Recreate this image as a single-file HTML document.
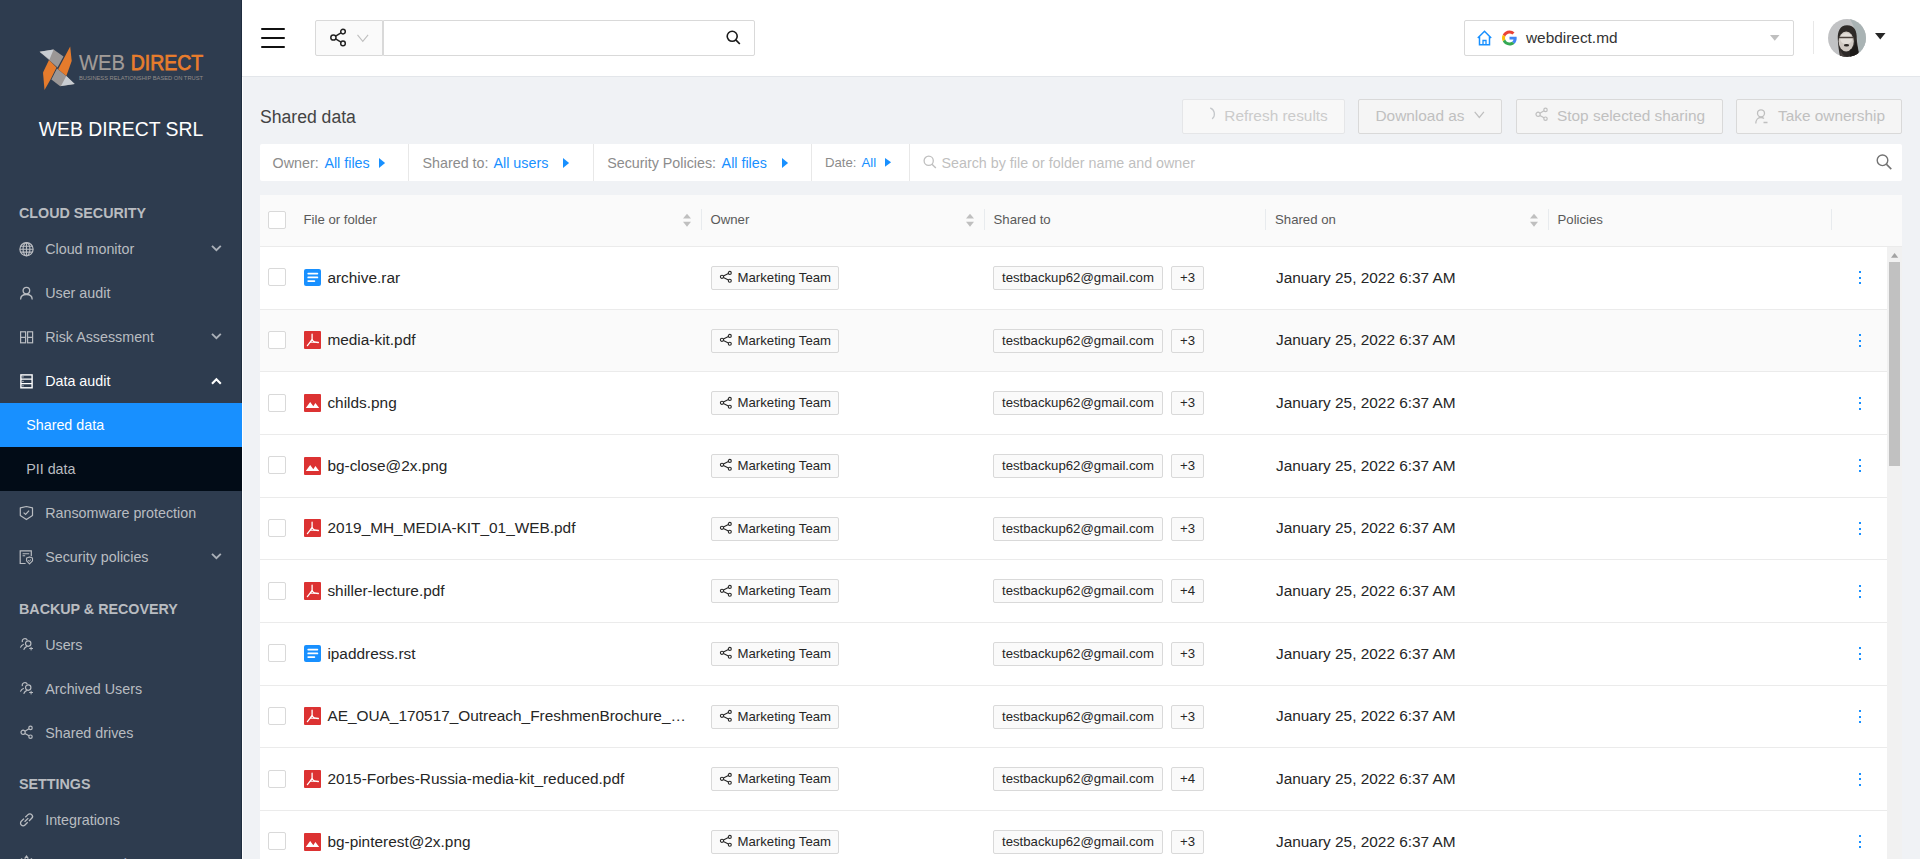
<!DOCTYPE html><html><head><meta charset="utf-8"><title>Shared data</title><style>
*{box-sizing:border-box;margin:0;padding:0}
html,body{width:1920px;height:859px;overflow:hidden;background:#f0f2f5;font-family:"Liberation Sans",sans-serif}
.t{position:absolute;white-space:nowrap}
.a{position:absolute}
svg{position:absolute;overflow:visible}
</style></head><body><div class="a" style="left:0;top:0;width:242px;height:859px;background:#2e3c4f;border-right:1px solid #1f2d3f"></div>
<svg style="left:0;top:0" width="242" height="100">
<polygon points="39.6,51.7 53.6,49.6 63.5,56.5 57.5,67.5 49,60" fill="#9b9796"/>
<polygon points="39.6,51.7 53.6,49.6 49.5,59.5" fill="#c9cdd2"/>
<polygon points="57,68.5 66.3,76 74.7,84 60.2,86.2 51.4,79.5" fill="#9b9796"/>
<polygon points="66.3,76 74.7,84 61,86" fill="#c9cdd2"/>
<polygon points="70.2,46.5 71.7,61 66.3,76 58.1,69.2" fill="#e57b2c"/>
<polygon points="49,60 56.5,67.5 50.5,79.5 44.5,90 43,72.5" fill="#e57b2c"/>
<text x="79" y="70" font-family="Liberation Sans" font-size="21.8" fill="#a19b98" stroke="#a19b98" stroke-width="0.15" textLength="46" lengthAdjust="spacingAndGlyphs" style="letter-spacing:0">WEB</text>
<text x="130.8" y="70" font-family="Liberation Sans" font-weight="normal" font-size="21.8" fill="#e87d2c" stroke="#e87d2c" stroke-width="0.75" textLength="72.3" lengthAdjust="spacingAndGlyphs">DIRECT</text>
<text x="79" y="79.8" font-family="Liberation Sans" font-weight="normal" font-size="5.6" fill="#928c8a" textLength="124" lengthAdjust="spacingAndGlyphs">BUSINESS RELATIONSHIP BASED ON TRUST</text>
</svg>
<div class="t" style="left:0;width:242px;text-align:center;top:120.18px;font-size:19.4px;line-height:19.4px;color:#fff">WEB DIRECT SRL</div>
<div class="t" style="left:19px;top:205.90px;font-size:14.3px;line-height:14.3px;color:#b9bcc1;font-weight:bold;">CLOUD SECURITY</div>
<div class="t" style="left:19px;top:601.90px;font-size:14.3px;line-height:14.3px;color:#b9bcc1;font-weight:bold;">BACKUP &amp; RECOVERY</div>
<div class="t" style="left:19px;top:776.90px;font-size:14.3px;line-height:14.3px;color:#b9bcc1;font-weight:bold;">SETTINGS</div>
<div class="a" style="left:0;top:403px;width:242px;height:44px;background:#1890ff"></div>
<div class="a" style="left:0;top:447px;width:242px;height:44px;background:#020c17"></div>
<div class="t" style="left:45.2px;top:241.70px;font-size:14.3px;line-height:14.3px;color:#b9bcc1;font-weight:normal;">Cloud monitor</div>
<svg style="left:19px;top:241.8px" width="15" height="15"><circle cx="7.5" cy="7.2" r="6.6" fill="none" stroke="#b9bcc1" stroke-width="1.2"/><ellipse cx="7.5" cy="7.2" rx="3.4" ry="6.6" fill="none" stroke="#b9bcc1" stroke-width="1.1"/><path d="M7.5 0.6v13.2M1.6 4.3h11.8M0.9 7.2h13.2M1.6 10.1h11.8" stroke="#b9bcc1" stroke-width="1.1" fill="none"/></svg>
<svg style="left:211px;top:244.8px" width="11" height="7"><path d="M1 0.8l4.4 4.4L9.8 0.8" fill="none" stroke="#aab0b8" stroke-width="1.9"/></svg>
<div class="t" style="left:45.2px;top:285.70px;font-size:14.3px;line-height:14.3px;color:#b9bcc1;font-weight:normal;">User audit</div>
<svg style="left:19px;top:285.8px" width="15" height="15"><circle cx="7.4" cy="4.6" r="3.3" fill="none" stroke="#b9bcc1" stroke-width="1.3"/><path d="M1.6 13.4C1.6 10.2 4 8.5 7.4 8.5S13.2 10.2 13.2 13.4" fill="none" stroke="#b9bcc1" stroke-width="1.3"/></svg>
<div class="t" style="left:45.2px;top:329.70px;font-size:14.3px;line-height:14.3px;color:#b9bcc1;font-weight:normal;">Risk Assessment</div>
<svg style="left:19px;top:329.8px" width="15" height="15"><rect x="1.6" y="1.8" width="5" height="11" fill="none" stroke="#b9bcc1" stroke-width="1.2"/><rect x="8.6" y="1.8" width="5" height="11" fill="none" stroke="#b9bcc1" stroke-width="1.2"/><path d="M1.6 7.3h5M8.6 7.3h5" stroke="#b9bcc1" stroke-width="1.2"/></svg>
<svg style="left:211px;top:332.8px" width="11" height="7"><path d="M1 0.8l4.4 4.4L9.8 0.8" fill="none" stroke="#aab0b8" stroke-width="1.9"/></svg>
<div class="t" style="left:45.2px;top:373.70px;font-size:14.3px;line-height:14.3px;color:#ffffff;font-weight:normal;">Data audit</div>
<svg style="left:19px;top:373.8px" width="15" height="15"><rect x="1.9" y="0.9" width="11.2" height="12.9" fill="none" stroke="#ffffff" stroke-width="1.4"/><path d="M1.9 5.2h11.2M1.9 9.6h11.2" stroke="#ffffff" stroke-width="1.2"/><path d="M3.4 2.9h1.1M3.4 7.4h1.1M3.4 11.8h1.1" stroke="#ffffff" stroke-width="1"/></svg>
<svg style="left:211px;top:378.0px" width="11" height="7"><path d="M1 5.8l4.4-4.6L9.8 5.8" fill="none" stroke="#fff" stroke-width="2.1"/></svg>
<div class="t" style="left:45.2px;top:505.70px;font-size:14.3px;line-height:14.3px;color:#b9bcc1;font-weight:normal;">Ransomware protection</div>
<svg style="left:19px;top:505.8px" width="15" height="15"><path d="M1.3 1.9L7.4 0.5 13.5 1.9V9.6L7.4 13.6 1.3 9.6Z" fill="none" stroke="#b9bcc1" stroke-width="1.2" stroke-linejoin="round"/><path d="M4.6 6.6L6.6 8.4 10.1 4.6" fill="none" stroke="#b9bcc1" stroke-width="1.2"/></svg>
<div class="t" style="left:45.2px;top:549.70px;font-size:14.3px;line-height:14.3px;color:#b9bcc1;font-weight:normal;">Security policies</div>
<svg style="left:19px;top:549.8px" width="15" height="15"><path d="M6.6 13.5H1.2V0.9H12.3V6.2" fill="none" stroke="#b9bcc1" stroke-width="1.2"/><path d="M3.6 3.7h6.6M3.6 5.8h2.6" stroke="#b9bcc1" stroke-width="1.1"/><path d="M7.6 8.1L10.5 6.9 13.5 8.1V10.9L10.5 13.9 7.6 10.9Z" fill="none" stroke="#b9bcc1" stroke-width="1.1" stroke-linejoin="round"/><path d="M9.1 10.3L10.2 11.3 12 9.5" fill="none" stroke="#b9bcc1" stroke-width="1"/></svg>
<svg style="left:211px;top:552.8px" width="11" height="7"><path d="M1 0.8l4.4 4.4L9.8 0.8" fill="none" stroke="#aab0b8" stroke-width="1.9"/></svg>
<div class="t" style="left:45.2px;top:637.60px;font-size:14.3px;line-height:14.3px;color:#b9bcc1;font-weight:normal;">Users</div>
<svg style="left:19px;top:637.7px" width="15" height="15"><path d="M3.4 4.1A2.6 2.6 0 1 1 8.3 2.3" fill="none" stroke="#b9bcc1" stroke-width="1.2"/><path d="M1.4 9.6Q2.2 7.2 4.8 6.3" fill="none" stroke="#b9bcc1" stroke-width="1.2"/><circle cx="9.2" cy="5.6" r="2.7" fill="none" stroke="#b9bcc1" stroke-width="1.2"/><path d="M4.7 11.7Q5.6 9.3 7.8 8.4" fill="none" stroke="#b9bcc1" stroke-width="1.2"/><path d="M10.2 10.5H14M12.1 8.8V12.4" stroke="#b9bcc1" stroke-width="1"/></svg>
<div class="t" style="left:45.2px;top:681.60px;font-size:14.3px;line-height:14.3px;color:#b9bcc1;font-weight:normal;">Archived Users</div>
<svg style="left:19px;top:681.7px" width="15" height="15"><path d="M3.4 4.1A2.6 2.6 0 1 1 8.3 2.3" fill="none" stroke="#b9bcc1" stroke-width="1.2"/><path d="M1.4 9.6Q2.2 7.2 4.8 6.3" fill="none" stroke="#b9bcc1" stroke-width="1.2"/><circle cx="9.2" cy="5.6" r="2.7" fill="none" stroke="#b9bcc1" stroke-width="1.2"/><path d="M4.7 11.7Q5.6 9.3 7.8 8.4" fill="none" stroke="#b9bcc1" stroke-width="1.2"/><path d="M10.2 10.5H14M12.1 8.8V12.4" stroke="#b9bcc1" stroke-width="1"/></svg>
<div class="t" style="left:45.2px;top:725.60px;font-size:14.3px;line-height:14.3px;color:#b9bcc1;font-weight:normal;">Shared drives</div>
<svg style="left:19px;top:725.7px" width="15" height="15"><circle cx="4.1" cy="6.3" r="2.1" fill="none" stroke="#b9bcc1" stroke-width="1.2"/><circle cx="11.5" cy="1.9" r="1.7" fill="none" stroke="#b9bcc1" stroke-width="1.2"/><circle cx="11.5" cy="10.7" r="1.7" fill="none" stroke="#b9bcc1" stroke-width="1.2"/><path d="M5.9 5.2L10 2.8M5.9 7.4L10 9.8" stroke="#b9bcc1" stroke-width="1.2"/></svg>
<div class="t" style="left:45.2px;top:812.90px;font-size:14.3px;line-height:14.3px;color:#b9bcc1;font-weight:normal;">Integrations</div>
<svg style="left:19px;top:813.0px" width="15" height="15"><path d="M5 5.6L2.3 8.3A2.6 2.6 0 0 0 6 12L8.7 9.3M6.3 4.3L9 1.6A2.6 2.6 0 0 1 12.7 5.3L10 8" fill="none" stroke="#b9bcc1" stroke-width="1.3"/><path d="M5.6 8.8L9.3 5.1" stroke="#b9bcc1" stroke-width="1.3"/></svg>
<div class="t" style="left:45.2px;top:856.90px;font-size:14.3px;line-height:14.3px;color:#b9bcc1;font-weight:normal;">Account settings</div>
<svg style="left:19px;top:857.0px" width="15" height="15"><path d="M5.7 1.6L7.5 -0.9 9.3 1.6M1.5 2.9L3.3 1.6M13.5 2.9L11.7 1.6" fill="none" stroke="#b9bcc1" stroke-width="1.4"/></svg>
<div class="a" style="left:125px;top:857.6px;width:1.2px;height:2px;background:#8e959e"></div>
<div class="t" style="left:26.2px;top:417.70px;font-size:14.3px;line-height:14.3px;color:#ffffff;font-weight:normal;">Shared data</div>
<div class="t" style="left:26.2px;top:461.70px;font-size:14.3px;line-height:14.3px;color:#b9bcc1;font-weight:normal;">PII data</div>
<div class="a" style="left:242px;top:0;width:1678px;height:77px;background:#fff;border-bottom:1px solid #e3e6ea"></div>
<div class="a" style="left:242px;top:77px;width:1px;height:782px;background:#fff"></div>
<div class="a" style="left:261px;top:28px;width:24px;height:2.4px;background:#111;border-radius:1px"></div>
<div class="a" style="left:261px;top:37px;width:24px;height:2.4px;background:#111;border-radius:1px"></div>
<div class="a" style="left:261px;top:46px;width:24px;height:2.4px;background:#111;border-radius:1px"></div>
<div class="a" style="left:315px;top:20px;width:68px;height:36px;background:#fafafa;border:1px solid #d9d9d9;border-radius:2px 0 0 2px"></div>
<div class="a" style="left:383px;top:20px;width:372px;height:36px;background:#fff;border:1px solid #d9d9d9;border-radius:0 2px 2px 0"></div>
<svg style="left:330px;top:28px" width="17" height="19"><circle cx="3.4" cy="9.5" r="2.6" fill="none" stroke="#222" stroke-width="1.5"/><circle cx="13" cy="3.6" r="2.3" fill="none" stroke="#222" stroke-width="1.5"/><circle cx="13" cy="15.4" r="2.3" fill="none" stroke="#222" stroke-width="1.5"/><path d="M5.6 8.1l5.4-3.3M5.6 10.9l5.4 3.3" stroke="#222" stroke-width="1.5"/></svg>
<svg style="left:357px;top:34px" width="12" height="9"><path d="M0.5 0.8l5.3 6.5 5.3-6.5" fill="none" stroke="#bfbfbf" stroke-width="1.1"/></svg>
<svg style="left:726px;top:30px" width="16" height="16"><circle cx="6.2" cy="6.3" r="5" fill="none" stroke="#1a1a1a" stroke-width="1.6"/><path d="M9.8 9.9l4 4.1" stroke="#1a1a1a" stroke-width="1.7"/></svg>
<div class="a" style="left:1464px;top:20px;width:330px;height:36px;background:#fff;border:1px solid #d9d9d9;border-radius:2px"></div>
<svg style="left:1477px;top:30px" width="16" height="16"><path d="M0.8 8L7.5 1.2 14.2 8" fill="none" stroke="#1890ff" stroke-width="1.5"/><path d="M2.5 6.8v8h10v-8" fill="none" stroke="#1890ff" stroke-width="1.5"/><path d="M6 14.8v-4.3h3v4.3" fill="none" stroke="#1890ff" stroke-width="1.3"/></svg>
<svg style="left:1502px;top:30px" width="15" height="16" viewBox="0 0 48 48"><path fill="#EA4335" d="M24 9.5c3.54 0 6.71 1.22 9.21 3.6l6.85-6.85C35.9 2.38 30.47 0 24 0 14.62 0 6.51 5.38 2.56 13.22l7.98 6.19C12.43 13.72 17.74 9.5 24 9.5z"/><path fill="#4285F4" d="M46.98 24.55c0-1.57-.15-3.09-.38-4.55H24v9.02h12.94c-.58 2.96-2.26 5.48-4.78 7.18l7.73 6c4.51-4.18 7.09-10.36 7.09-17.65z"/><path fill="#FBBC05" d="M10.53 28.59c-.48-1.45-.76-2.99-.76-4.59s.27-3.14.76-4.59l-7.98-6.19C.92 16.46 0 20.12 0 24c0 3.88.92 7.54 2.56 10.78l7.97-6.19z"/><path fill="#34A853" d="M24 48c6.48 0 11.93-2.13 15.89-5.81l-7.73-6c-2.15 1.45-4.92 2.3-8.16 2.3-6.26 0-11.57-4.22-13.47-9.91l-7.98 6.19C6.51 42.62 14.62 48 24 48z"/></svg>
<div class="t" style="left:1526px;top:29.96px;font-size:15.4px;line-height:15.4px;color:#333333;font-weight:normal;">webdirect.md</div>
<svg style="left:1770px;top:35px" width="10" height="6"><path d="M0 0h9.5L4.75 5.8z" fill="#bfbfbf"/></svg>
<div class="a" style="left:1813px;top:21px;width:1px;height:33px;background:#e8e8e8"></div>
<svg style="left:1828px;top:19px" width="38" height="38"><defs><clipPath id="av"><circle cx="19" cy="19" r="19"/></clipPath></defs>
<g clip-path="url(#av)"><rect width="38" height="38" fill="#c1c2c4"/><path d="M22 0H38V38H30C31 28 30 14 22 0Z" fill="#a9b3b4"/>
<path d="M9.8 20C9.5 12 12 6.5 19 6.3C26.5 6.3 29 12 28.8 20C29.5 28 31.5 34 30.5 38H12C11 32 10 26 9.8 20Z" fill="#2e2a28"/>
<ellipse cx="18.2" cy="22.5" rx="7.6" ry="10" fill="#cfc8c2"/>
<ellipse cx="18.2" cy="19.5" rx="6" ry="5.5" fill="#e2ddd8"/>
<path d="M11 18.5H25.5" stroke="#4a403b" stroke-width="1.4"/>
<ellipse cx="18.5" cy="26.2" rx="2.6" ry="1.3" fill="#2a2624"/>
<path d="M22 31C25.5 29.5 27.2 26 27.5 21L30.5 33C29 36.5 26 38 22 38Z" fill="#1d1a19"/>
<path d="M12.5 31C14 35 16 37 19 38H12Z" fill="#4a4340"/>
</g></svg>
<svg style="left:1875px;top:33px" width="11" height="7"><path d="M0 0h10.5L5.25 6.5z" fill="#262626"/></svg>
<div class="t" style="left:260px;top:109.30px;font-size:17.6px;line-height:17.6px;color:#434343;font-weight:normal;">Shared data</div>
<div class="a" style="left:1182px;top:99px;width:163px;height:35px;background-color:#f8f8f8;border:1px solid #e5e6e8;border-radius:2px"></div>
<div class="t" style="left:1224.3px;top:108.16px;font-size:15.4px;line-height:15.4px;color:#cbcbcb;font-weight:normal;">Refresh results</div>
<svg style="left:1200px;top:104px" width="20" height="20"><path d="M10.6 4.2A6.3 6.3 0 0 1 12.5 14.5" fill="none" stroke="#c6c9cc" stroke-width="1.3" stroke-linecap="round"/></svg>
<div class="a" style="left:1358px;top:99px;width:144px;height:35px;background-color:#f5f5f5;border:1px solid #d9d9d9;border-radius:2px"></div>
<div class="t" style="left:1375.5px;top:108.16px;font-size:15.4px;line-height:15.4px;color:#c0c0c0;font-weight:normal;">Download as</div>
<svg style="left:1474px;top:111px" width="11" height="8"><path d="M0.7 0.8L5.3 6.5 9.9 0.8" fill="none" stroke="#bfbfbf" stroke-width="1.2"/></svg>
<div class="a" style="left:1516px;top:99px;width:207px;height:35px;background-color:#f5f5f5;border:1px solid #d9d9d9;border-radius:2px"></div>
<div class="t" style="left:1557px;top:108.16px;font-size:15.4px;line-height:15.4px;color:#c0c0c0;font-weight:normal;">Stop selected sharing</div>
<svg style="left:1534px;top:108px" width="14" height="14"><circle cx="4.1" cy="6.3" r="2.1" fill="none" stroke="#bfbfbf" stroke-width="1.2"/><circle cx="11.5" cy="1.9" r="1.7" fill="none" stroke="#bfbfbf" stroke-width="1.2"/><circle cx="11.5" cy="10.7" r="1.7" fill="none" stroke="#bfbfbf" stroke-width="1.2"/><path d="M5.9 5.2L10 2.8M5.9 7.4L10 9.8" stroke="#bfbfbf" stroke-width="1.2"/></svg>
<div class="a" style="left:1736px;top:99px;width:166px;height:35px;background-color:#f5f5f5;border:1px solid #d9d9d9;border-radius:2px"></div>
<div class="t" style="left:1778px;top:108.16px;font-size:15.4px;line-height:15.4px;color:#c0c0c0;font-weight:normal;">Take ownership</div>
<svg style="left:1755px;top:108.8px" width="14" height="15"><circle cx="6" cy="4.3" r="3.5" fill="none" stroke="#bfbfbf" stroke-width="1.3"/><path d="M0.8 14.5c0-3.5 2.2-6 5.2-6 1.2 0 2.2.3 3 .9M8.5 13.5h4" fill="none" stroke="#bfbfbf" stroke-width="1.3"/></svg>
<div class="a" style="left:260px;top:144px;width:1642px;height:37px;background:#fff;border-radius:2px"></div>
<div class="a" style="left:408px;top:144px;width:1px;height:37px;background:#e8e8e8"></div>
<div class="a" style="left:593px;top:144px;width:1px;height:37px;background:#e8e8e8"></div>
<div class="a" style="left:811px;top:144px;width:1px;height:37px;background:#e8e8e8"></div>
<div class="a" style="left:909px;top:144px;width:1px;height:37px;background:#e8e8e8"></div>
<div class="t" style="left:272.6px;top:155.60px;font-size:14.3px;line-height:14.3px;color:#8c8c8c;font-weight:normal;">Owner:</div>
<div class="t" style="left:324.4px;top:155.60px;font-size:14.3px;line-height:14.3px;color:#1890ff;font-weight:normal;">All files</div>
<svg style="left:379px;top:158px" width="7" height="11"><path d="M0 0L6.1 4.95 0 9.90z" fill="#1890ff"/></svg>
<div class="t" style="left:422.5px;top:155.60px;font-size:14.3px;line-height:14.3px;color:#8c8c8c;font-weight:normal;">Shared to:</div>
<div class="t" style="left:493.5px;top:155.60px;font-size:14.3px;line-height:14.3px;color:#1890ff;font-weight:normal;">All users</div>
<svg style="left:563px;top:158px" width="7" height="11"><path d="M0 0L6.1 4.95 0 9.90z" fill="#1890ff"/></svg>
<div class="t" style="left:607.2px;top:155.60px;font-size:14.3px;line-height:14.3px;color:#8c8c8c;font-weight:normal;">Security Policies:</div>
<div class="t" style="left:721.6px;top:155.60px;font-size:14.3px;line-height:14.3px;color:#1890ff;font-weight:normal;">All files</div>
<svg style="left:782px;top:158px" width="7" height="11"><path d="M0 0L6.1 4.95 0 9.90z" fill="#1890ff"/></svg>
<div class="t" style="left:825px;top:156.03px;font-size:13.2px;line-height:13.2px;color:#8c8c8c;font-weight:normal;">Date:</div>
<div class="t" style="left:861.5px;top:156.03px;font-size:13.2px;line-height:13.2px;color:#1890ff;font-weight:normal;">All</div>
<svg style="left:885.3px;top:158.2px" width="7" height="11"><path d="M0 0L6.1 4.35 0 8.70z" fill="#1890ff"/></svg>
<svg style="left:922.6px;top:155px" width="15" height="15"><circle cx="5.7" cy="5.8" r="4.6" fill="none" stroke="#bfbfbf" stroke-width="1.3"/><path d="M9 9.2l3.8 3.8" stroke="#bfbfbf" stroke-width="1.4"/></svg>
<div class="t" style="left:941.5px;top:155.50px;font-size:14.3px;line-height:14.3px;color:#bfbfbf;font-weight:normal;">Search by file or folder name and owner</div>
<svg style="left:1876px;top:154px" width="17" height="16"><circle cx="6.5" cy="6.3" r="5.3" fill="none" stroke="#737373" stroke-width="1.4"/><path d="M10.3 10.1l5 5" stroke="#737373" stroke-width="1.5"/></svg>
<div class="a" style="left:260px;top:195px;width:1642px;height:52px;background:#fafafa;border-bottom:1px solid #ebebeb"></div>
<div class="a" style="left:260px;top:247px;width:1627px;height:612px;background:#fff"></div>
<div class="a" style="left:268px;top:211px;width:18px;height:18px;background:#fff;border:1px solid #d9d9d9;border-radius:2px"></div>
<div class="t" style="left:303.5px;top:212.73px;font-size:13.2px;line-height:13.2px;color:#595959;font-weight:normal;">File or folder</div>
<div class="t" style="left:710.5px;top:212.73px;font-size:13.2px;line-height:13.2px;color:#595959;font-weight:normal;">Owner</div>
<div class="t" style="left:993.5px;top:212.73px;font-size:13.2px;line-height:13.2px;color:#595959;font-weight:normal;">Shared to</div>
<div class="t" style="left:1275px;top:212.73px;font-size:13.2px;line-height:13.2px;color:#595959;font-weight:normal;">Shared on</div>
<div class="t" style="left:1557.5px;top:212.73px;font-size:13.2px;line-height:13.2px;color:#595959;font-weight:normal;">Policies</div>
<div class="a" style="left:701px;top:209px;width:1px;height:21px;background:#e8ebee"></div>
<div class="a" style="left:984px;top:209px;width:1px;height:21px;background:#e8ebee"></div>
<div class="a" style="left:1265px;top:209px;width:1px;height:21px;background:#e8ebee"></div>
<div class="a" style="left:1548px;top:209px;width:1px;height:21px;background:#e8ebee"></div>
<div class="a" style="left:1831px;top:209px;width:1px;height:21px;background:#e8ebee"></div>
<svg style="left:683px;top:213px" width="9" height="14"><path d="M0 5.6L4 0.7 8 5.6z" fill="#bfbfbf"/><path d="M0 8.8L4 13.8 8 8.8z" fill="#bfbfbf"/></svg>
<svg style="left:966px;top:213px" width="9" height="14"><path d="M0 5.6L4 0.7 8 5.6z" fill="#bfbfbf"/><path d="M0 8.8L4 13.8 8 8.8z" fill="#bfbfbf"/></svg>
<svg style="left:1530px;top:213px" width="9" height="14"><path d="M0 5.6L4 0.7 8 5.6z" fill="#bfbfbf"/><path d="M0 8.8L4 13.8 8 8.8z" fill="#bfbfbf"/></svg>
<div class="a" style="left:1887px;top:247px;width:15px;height:612px;background:#f1f1f1"></div>
<svg style="left:1891px;top:252.5px" width="8" height="5"><path d="M0 4.7L3.6 0 7.2 4.7z" fill="#a3a3a3"/></svg>
<div class="a" style="left:1889px;top:262px;width:11px;height:204px;background:#c1c1c1"></div>
<div class="a" style="left:260px;top:309px;width:1627px;height:1px;background:#ebebeb"></div>
<div class="a" style="left:268px;top:268px;width:18px;height:18px;background:#fff;border:1px solid #d9d9d9;border-radius:2px"></div>
<svg style="left:304px;top:269px" width="17" height="18"><rect width="17" height="17" rx="2" fill="#1890ff"/><path d="M4.2 4.6h9.2M4.2 8.4h9.2M4.2 12.1h6.2" stroke="#fff" stroke-width="1.7" stroke-linecap="round"/></svg>
<div class="t" style="left:327.4px;top:269.80px;font-size:15.4px;line-height:15.4px;color:#262626;font-weight:normal;">archive.rar</div>
<div class="a" style="left:711px;top:266.0px;width:128px;height:24px;background:#fafafa;border:1px solid #d9d9d9;border-radius:2px"></div>
<svg style="left:720px;top:271.1px" width="12" height="12"><circle cx="2" cy="5.8" r="1.6" fill="none" stroke="#262626" stroke-width="1.1"/><circle cx="9.8" cy="1.9" r="1.5" fill="none" stroke="#262626" stroke-width="1.1"/><circle cx="9.8" cy="9.8" r="1.5" fill="none" stroke="#262626" stroke-width="1.1"/><path d="M3.4 5l5-2.4M3.4 6.6l5 2.4" stroke="#262626" stroke-width="1.1"/></svg>
<div class="t" style="left:737.5px;top:271.16px;font-size:13.2px;line-height:13.2px;color:#262626;font-weight:normal;">Marketing Team</div>
<div class="a" style="left:993px;top:266.0px;width:170px;height:24px;background:#fafafa;border:1px solid #d9d9d9;border-radius:2px"></div>
<div class="t" style="left:1002px;top:271.16px;font-size:13.2px;line-height:13.2px;color:#262626;font-weight:normal;">testbackup62@gmail.com</div>
<div class="a" style="left:1171px;top:266.0px;width:33px;height:24px;background:#fafafa;border:1px solid #d9d9d9;border-radius:2px"></div>
<div class="t" style="left:1180px;top:271.16px;font-size:13.2px;line-height:13.2px;color:#262626;font-weight:normal;">+3</div>
<div class="t" style="left:1276px;top:269.80px;font-size:15.4px;line-height:15.4px;color:#262626;font-weight:normal;">January 25, 2022 6:37 AM</div>
<div class="a" style="left:1859px;top:271.3px;width:2.2px;height:2.2px;background:#1890ff"></div>
<div class="a" style="left:1859px;top:276.8px;width:2.2px;height:2.2px;background:#1890ff"></div>
<div class="a" style="left:1859px;top:282.3px;width:2.2px;height:2.2px;background:#1890ff"></div>
<div class="a" style="left:260px;top:310px;width:1627px;height:61px;background:#fafafa"></div>
<div class="a" style="left:260px;top:371px;width:1627px;height:1px;background:#ebebeb"></div>
<div class="a" style="left:268px;top:331px;width:18px;height:18px;background:#fff;border:1px solid #d9d9d9;border-radius:2px"></div>
<svg style="left:304px;top:331px" width="17" height="18"><rect width="17" height="18" rx="1" fill="#dc3232"/><path d="M8.1 3.2V8.6L3.4 14.6M10.3 11L14.4 11.5" fill="none" stroke="#fff" stroke-width="1.3" stroke-linejoin="round" stroke-linecap="round"/><path d="M8.1 8.6L6.2 11.3H10.4Z" fill="none" stroke="#fff" stroke-width="1.1" stroke-linejoin="round"/></svg>
<div class="t" style="left:327.4px;top:332.46px;font-size:15.4px;line-height:15.4px;color:#262626;font-weight:normal;">media-kit.pdf</div>
<div class="a" style="left:711px;top:329.0px;width:128px;height:24px;background:#fafafa;border:1px solid #d9d9d9;border-radius:2px"></div>
<svg style="left:720px;top:333.8px" width="12" height="12"><circle cx="2" cy="5.8" r="1.6" fill="none" stroke="#262626" stroke-width="1.1"/><circle cx="9.8" cy="1.9" r="1.5" fill="none" stroke="#262626" stroke-width="1.1"/><circle cx="9.8" cy="9.8" r="1.5" fill="none" stroke="#262626" stroke-width="1.1"/><path d="M3.4 5l5-2.4M3.4 6.6l5 2.4" stroke="#262626" stroke-width="1.1"/></svg>
<div class="t" style="left:737.5px;top:333.83px;font-size:13.2px;line-height:13.2px;color:#262626;font-weight:normal;">Marketing Team</div>
<div class="a" style="left:993px;top:329.0px;width:170px;height:24px;background:#fafafa;border:1px solid #d9d9d9;border-radius:2px"></div>
<div class="t" style="left:1002px;top:333.83px;font-size:13.2px;line-height:13.2px;color:#262626;font-weight:normal;">testbackup62@gmail.com</div>
<div class="a" style="left:1171px;top:329.0px;width:33px;height:24px;background:#fafafa;border:1px solid #d9d9d9;border-radius:2px"></div>
<div class="t" style="left:1180px;top:333.83px;font-size:13.2px;line-height:13.2px;color:#262626;font-weight:normal;">+3</div>
<div class="t" style="left:1276px;top:332.46px;font-size:15.4px;line-height:15.4px;color:#262626;font-weight:normal;">January 25, 2022 6:37 AM</div>
<div class="a" style="left:1859px;top:334.0px;width:2.2px;height:2.2px;background:#1890ff"></div>
<div class="a" style="left:1859px;top:339.5px;width:2.2px;height:2.2px;background:#1890ff"></div>
<div class="a" style="left:1859px;top:345.0px;width:2.2px;height:2.2px;background:#1890ff"></div>
<div class="a" style="left:260px;top:434px;width:1627px;height:1px;background:#ebebeb"></div>
<div class="a" style="left:268px;top:394px;width:18px;height:18px;background:#fff;border:1px solid #d9d9d9;border-radius:2px"></div>
<svg style="left:304px;top:394px" width="17" height="18"><rect width="17" height="18" rx="1" fill="#dc3232"/><path d="M1.8 14.1L6.2 7.9L9.3 12.2L11.4 9L15.2 14.1Z" fill="#fff"/></svg>
<div class="t" style="left:327.4px;top:395.13px;font-size:15.4px;line-height:15.4px;color:#262626;font-weight:normal;">childs.png</div>
<div class="a" style="left:711px;top:391.0px;width:128px;height:24px;background:#fafafa;border:1px solid #d9d9d9;border-radius:2px"></div>
<svg style="left:720px;top:396.5px" width="12" height="12"><circle cx="2" cy="5.8" r="1.6" fill="none" stroke="#262626" stroke-width="1.1"/><circle cx="9.8" cy="1.9" r="1.5" fill="none" stroke="#262626" stroke-width="1.1"/><circle cx="9.8" cy="9.8" r="1.5" fill="none" stroke="#262626" stroke-width="1.1"/><path d="M3.4 5l5-2.4M3.4 6.6l5 2.4" stroke="#262626" stroke-width="1.1"/></svg>
<div class="t" style="left:737.5px;top:396.49px;font-size:13.2px;line-height:13.2px;color:#262626;font-weight:normal;">Marketing Team</div>
<div class="a" style="left:993px;top:391.0px;width:170px;height:24px;background:#fafafa;border:1px solid #d9d9d9;border-radius:2px"></div>
<div class="t" style="left:1002px;top:396.49px;font-size:13.2px;line-height:13.2px;color:#262626;font-weight:normal;">testbackup62@gmail.com</div>
<div class="a" style="left:1171px;top:391.0px;width:33px;height:24px;background:#fafafa;border:1px solid #d9d9d9;border-radius:2px"></div>
<div class="t" style="left:1180px;top:396.49px;font-size:13.2px;line-height:13.2px;color:#262626;font-weight:normal;">+3</div>
<div class="t" style="left:1276px;top:395.13px;font-size:15.4px;line-height:15.4px;color:#262626;font-weight:normal;">January 25, 2022 6:37 AM</div>
<div class="a" style="left:1859px;top:396.7px;width:2.2px;height:2.2px;background:#1890ff"></div>
<div class="a" style="left:1859px;top:402.2px;width:2.2px;height:2.2px;background:#1890ff"></div>
<div class="a" style="left:1859px;top:407.7px;width:2.2px;height:2.2px;background:#1890ff"></div>
<div class="a" style="left:260px;top:497px;width:1627px;height:1px;background:#ebebeb"></div>
<div class="a" style="left:268px;top:456px;width:18px;height:18px;background:#fff;border:1px solid #d9d9d9;border-radius:2px"></div>
<svg style="left:304px;top:457px" width="17" height="18"><rect width="17" height="18" rx="1" fill="#dc3232"/><path d="M1.8 14.1L6.2 7.9L9.3 12.2L11.4 9L15.2 14.1Z" fill="#fff"/></svg>
<div class="t" style="left:327.4px;top:457.80px;font-size:15.4px;line-height:15.4px;color:#262626;font-weight:normal;">bg-close@2x.png</div>
<div class="a" style="left:711px;top:454.0px;width:128px;height:24px;background:#fafafa;border:1px solid #d9d9d9;border-radius:2px"></div>
<svg style="left:720px;top:459.1px" width="12" height="12"><circle cx="2" cy="5.8" r="1.6" fill="none" stroke="#262626" stroke-width="1.1"/><circle cx="9.8" cy="1.9" r="1.5" fill="none" stroke="#262626" stroke-width="1.1"/><circle cx="9.8" cy="9.8" r="1.5" fill="none" stroke="#262626" stroke-width="1.1"/><path d="M3.4 5l5-2.4M3.4 6.6l5 2.4" stroke="#262626" stroke-width="1.1"/></svg>
<div class="t" style="left:737.5px;top:459.16px;font-size:13.2px;line-height:13.2px;color:#262626;font-weight:normal;">Marketing Team</div>
<div class="a" style="left:993px;top:454.0px;width:170px;height:24px;background:#fafafa;border:1px solid #d9d9d9;border-radius:2px"></div>
<div class="t" style="left:1002px;top:459.16px;font-size:13.2px;line-height:13.2px;color:#262626;font-weight:normal;">testbackup62@gmail.com</div>
<div class="a" style="left:1171px;top:454.0px;width:33px;height:24px;background:#fafafa;border:1px solid #d9d9d9;border-radius:2px"></div>
<div class="t" style="left:1180px;top:459.16px;font-size:13.2px;line-height:13.2px;color:#262626;font-weight:normal;">+3</div>
<div class="t" style="left:1276px;top:457.80px;font-size:15.4px;line-height:15.4px;color:#262626;font-weight:normal;">January 25, 2022 6:37 AM</div>
<div class="a" style="left:1859px;top:459.3px;width:2.2px;height:2.2px;background:#1890ff"></div>
<div class="a" style="left:1859px;top:464.8px;width:2.2px;height:2.2px;background:#1890ff"></div>
<div class="a" style="left:1859px;top:470.3px;width:2.2px;height:2.2px;background:#1890ff"></div>
<div class="a" style="left:260px;top:559px;width:1627px;height:1px;background:#ebebeb"></div>
<div class="a" style="left:268px;top:519px;width:18px;height:18px;background:#fff;border:1px solid #d9d9d9;border-radius:2px"></div>
<svg style="left:304px;top:519px" width="17" height="18"><rect width="17" height="18" rx="1" fill="#dc3232"/><path d="M8.1 3.2V8.6L3.4 14.6M10.3 11L14.4 11.5" fill="none" stroke="#fff" stroke-width="1.3" stroke-linejoin="round" stroke-linecap="round"/><path d="M8.1 8.6L6.2 11.3H10.4Z" fill="none" stroke="#fff" stroke-width="1.1" stroke-linejoin="round"/></svg>
<div class="t" style="left:327.4px;top:520.46px;font-size:15.4px;line-height:15.4px;color:#262626;font-weight:normal;">2019_MH_MEDIA-KIT_01_WEB.pdf</div>
<div class="a" style="left:711px;top:517.0px;width:128px;height:24px;background:#fafafa;border:1px solid #d9d9d9;border-radius:2px"></div>
<svg style="left:720px;top:521.8px" width="12" height="12"><circle cx="2" cy="5.8" r="1.6" fill="none" stroke="#262626" stroke-width="1.1"/><circle cx="9.8" cy="1.9" r="1.5" fill="none" stroke="#262626" stroke-width="1.1"/><circle cx="9.8" cy="9.8" r="1.5" fill="none" stroke="#262626" stroke-width="1.1"/><path d="M3.4 5l5-2.4M3.4 6.6l5 2.4" stroke="#262626" stroke-width="1.1"/></svg>
<div class="t" style="left:737.5px;top:521.83px;font-size:13.2px;line-height:13.2px;color:#262626;font-weight:normal;">Marketing Team</div>
<div class="a" style="left:993px;top:517.0px;width:170px;height:24px;background:#fafafa;border:1px solid #d9d9d9;border-radius:2px"></div>
<div class="t" style="left:1002px;top:521.83px;font-size:13.2px;line-height:13.2px;color:#262626;font-weight:normal;">testbackup62@gmail.com</div>
<div class="a" style="left:1171px;top:517.0px;width:33px;height:24px;background:#fafafa;border:1px solid #d9d9d9;border-radius:2px"></div>
<div class="t" style="left:1180px;top:521.83px;font-size:13.2px;line-height:13.2px;color:#262626;font-weight:normal;">+3</div>
<div class="t" style="left:1276px;top:520.46px;font-size:15.4px;line-height:15.4px;color:#262626;font-weight:normal;">January 25, 2022 6:37 AM</div>
<div class="a" style="left:1859px;top:522.0px;width:2.2px;height:2.2px;background:#1890ff"></div>
<div class="a" style="left:1859px;top:527.5px;width:2.2px;height:2.2px;background:#1890ff"></div>
<div class="a" style="left:1859px;top:533.0px;width:2.2px;height:2.2px;background:#1890ff"></div>
<div class="a" style="left:260px;top:622px;width:1627px;height:1px;background:#ebebeb"></div>
<div class="a" style="left:268px;top:582px;width:18px;height:18px;background:#fff;border:1px solid #d9d9d9;border-radius:2px"></div>
<svg style="left:304px;top:582px" width="17" height="18"><rect width="17" height="18" rx="1" fill="#dc3232"/><path d="M8.1 3.2V8.6L3.4 14.6M10.3 11L14.4 11.5" fill="none" stroke="#fff" stroke-width="1.3" stroke-linejoin="round" stroke-linecap="round"/><path d="M8.1 8.6L6.2 11.3H10.4Z" fill="none" stroke="#fff" stroke-width="1.1" stroke-linejoin="round"/></svg>
<div class="t" style="left:327.4px;top:583.13px;font-size:15.4px;line-height:15.4px;color:#262626;font-weight:normal;">shiller-lecture.pdf</div>
<div class="a" style="left:711px;top:579.0px;width:128px;height:24px;background:#fafafa;border:1px solid #d9d9d9;border-radius:2px"></div>
<svg style="left:720px;top:584.5px" width="12" height="12"><circle cx="2" cy="5.8" r="1.6" fill="none" stroke="#262626" stroke-width="1.1"/><circle cx="9.8" cy="1.9" r="1.5" fill="none" stroke="#262626" stroke-width="1.1"/><circle cx="9.8" cy="9.8" r="1.5" fill="none" stroke="#262626" stroke-width="1.1"/><path d="M3.4 5l5-2.4M3.4 6.6l5 2.4" stroke="#262626" stroke-width="1.1"/></svg>
<div class="t" style="left:737.5px;top:584.49px;font-size:13.2px;line-height:13.2px;color:#262626;font-weight:normal;">Marketing Team</div>
<div class="a" style="left:993px;top:579.0px;width:170px;height:24px;background:#fafafa;border:1px solid #d9d9d9;border-radius:2px"></div>
<div class="t" style="left:1002px;top:584.49px;font-size:13.2px;line-height:13.2px;color:#262626;font-weight:normal;">testbackup62@gmail.com</div>
<div class="a" style="left:1171px;top:579.0px;width:33px;height:24px;background:#fafafa;border:1px solid #d9d9d9;border-radius:2px"></div>
<div class="t" style="left:1180px;top:584.49px;font-size:13.2px;line-height:13.2px;color:#262626;font-weight:normal;">+4</div>
<div class="t" style="left:1276px;top:583.13px;font-size:15.4px;line-height:15.4px;color:#262626;font-weight:normal;">January 25, 2022 6:37 AM</div>
<div class="a" style="left:1859px;top:584.7px;width:2.2px;height:2.2px;background:#1890ff"></div>
<div class="a" style="left:1859px;top:590.2px;width:2.2px;height:2.2px;background:#1890ff"></div>
<div class="a" style="left:1859px;top:595.7px;width:2.2px;height:2.2px;background:#1890ff"></div>
<div class="a" style="left:260px;top:685px;width:1627px;height:1px;background:#ebebeb"></div>
<div class="a" style="left:268px;top:644px;width:18px;height:18px;background:#fff;border:1px solid #d9d9d9;border-radius:2px"></div>
<svg style="left:304px;top:645px" width="17" height="18"><rect width="17" height="17" rx="2" fill="#1890ff"/><path d="M4.2 4.6h9.2M4.2 8.4h9.2M4.2 12.1h6.2" stroke="#fff" stroke-width="1.7" stroke-linecap="round"/></svg>
<div class="t" style="left:327.4px;top:645.80px;font-size:15.4px;line-height:15.4px;color:#262626;font-weight:normal;">ipaddress.rst</div>
<div class="a" style="left:711px;top:642.0px;width:128px;height:24px;background:#fafafa;border:1px solid #d9d9d9;border-radius:2px"></div>
<svg style="left:720px;top:647.1px" width="12" height="12"><circle cx="2" cy="5.8" r="1.6" fill="none" stroke="#262626" stroke-width="1.1"/><circle cx="9.8" cy="1.9" r="1.5" fill="none" stroke="#262626" stroke-width="1.1"/><circle cx="9.8" cy="9.8" r="1.5" fill="none" stroke="#262626" stroke-width="1.1"/><path d="M3.4 5l5-2.4M3.4 6.6l5 2.4" stroke="#262626" stroke-width="1.1"/></svg>
<div class="t" style="left:737.5px;top:647.16px;font-size:13.2px;line-height:13.2px;color:#262626;font-weight:normal;">Marketing Team</div>
<div class="a" style="left:993px;top:642.0px;width:170px;height:24px;background:#fafafa;border:1px solid #d9d9d9;border-radius:2px"></div>
<div class="t" style="left:1002px;top:647.16px;font-size:13.2px;line-height:13.2px;color:#262626;font-weight:normal;">testbackup62@gmail.com</div>
<div class="a" style="left:1171px;top:642.0px;width:33px;height:24px;background:#fafafa;border:1px solid #d9d9d9;border-radius:2px"></div>
<div class="t" style="left:1180px;top:647.16px;font-size:13.2px;line-height:13.2px;color:#262626;font-weight:normal;">+3</div>
<div class="t" style="left:1276px;top:645.80px;font-size:15.4px;line-height:15.4px;color:#262626;font-weight:normal;">January 25, 2022 6:37 AM</div>
<div class="a" style="left:1859px;top:647.3px;width:2.2px;height:2.2px;background:#1890ff"></div>
<div class="a" style="left:1859px;top:652.8px;width:2.2px;height:2.2px;background:#1890ff"></div>
<div class="a" style="left:1859px;top:658.3px;width:2.2px;height:2.2px;background:#1890ff"></div>
<div class="a" style="left:260px;top:747px;width:1627px;height:1px;background:#ebebeb"></div>
<div class="a" style="left:268px;top:707px;width:18px;height:18px;background:#fff;border:1px solid #d9d9d9;border-radius:2px"></div>
<svg style="left:304px;top:707px" width="17" height="18"><rect width="17" height="18" rx="1" fill="#dc3232"/><path d="M8.1 3.2V8.6L3.4 14.6M10.3 11L14.4 11.5" fill="none" stroke="#fff" stroke-width="1.3" stroke-linejoin="round" stroke-linecap="round"/><path d="M8.1 8.6L6.2 11.3H10.4Z" fill="none" stroke="#fff" stroke-width="1.1" stroke-linejoin="round"/></svg>
<div class="t" style="left:327.4px;top:708.46px;font-size:15.4px;line-height:15.4px;color:#262626;font-weight:normal;">AE_OUA_170517_Outreach_FreshmenBrochure_…</div>
<div class="a" style="left:711px;top:705.0px;width:128px;height:24px;background:#fafafa;border:1px solid #d9d9d9;border-radius:2px"></div>
<svg style="left:720px;top:709.8px" width="12" height="12"><circle cx="2" cy="5.8" r="1.6" fill="none" stroke="#262626" stroke-width="1.1"/><circle cx="9.8" cy="1.9" r="1.5" fill="none" stroke="#262626" stroke-width="1.1"/><circle cx="9.8" cy="9.8" r="1.5" fill="none" stroke="#262626" stroke-width="1.1"/><path d="M3.4 5l5-2.4M3.4 6.6l5 2.4" stroke="#262626" stroke-width="1.1"/></svg>
<div class="t" style="left:737.5px;top:709.83px;font-size:13.2px;line-height:13.2px;color:#262626;font-weight:normal;">Marketing Team</div>
<div class="a" style="left:993px;top:705.0px;width:170px;height:24px;background:#fafafa;border:1px solid #d9d9d9;border-radius:2px"></div>
<div class="t" style="left:1002px;top:709.83px;font-size:13.2px;line-height:13.2px;color:#262626;font-weight:normal;">testbackup62@gmail.com</div>
<div class="a" style="left:1171px;top:705.0px;width:33px;height:24px;background:#fafafa;border:1px solid #d9d9d9;border-radius:2px"></div>
<div class="t" style="left:1180px;top:709.83px;font-size:13.2px;line-height:13.2px;color:#262626;font-weight:normal;">+3</div>
<div class="t" style="left:1276px;top:708.46px;font-size:15.4px;line-height:15.4px;color:#262626;font-weight:normal;">January 25, 2022 6:37 AM</div>
<div class="a" style="left:1859px;top:710.0px;width:2.2px;height:2.2px;background:#1890ff"></div>
<div class="a" style="left:1859px;top:715.5px;width:2.2px;height:2.2px;background:#1890ff"></div>
<div class="a" style="left:1859px;top:721.0px;width:2.2px;height:2.2px;background:#1890ff"></div>
<div class="a" style="left:260px;top:810px;width:1627px;height:1px;background:#ebebeb"></div>
<div class="a" style="left:268px;top:770px;width:18px;height:18px;background:#fff;border:1px solid #d9d9d9;border-radius:2px"></div>
<svg style="left:304px;top:770px" width="17" height="18"><rect width="17" height="18" rx="1" fill="#dc3232"/><path d="M8.1 3.2V8.6L3.4 14.6M10.3 11L14.4 11.5" fill="none" stroke="#fff" stroke-width="1.3" stroke-linejoin="round" stroke-linecap="round"/><path d="M8.1 8.6L6.2 11.3H10.4Z" fill="none" stroke="#fff" stroke-width="1.1" stroke-linejoin="round"/></svg>
<div class="t" style="left:327.4px;top:771.13px;font-size:15.4px;line-height:15.4px;color:#262626;font-weight:normal;">2015-Forbes-Russia-media-kit_reduced.pdf</div>
<div class="a" style="left:711px;top:767.0px;width:128px;height:24px;background:#fafafa;border:1px solid #d9d9d9;border-radius:2px"></div>
<svg style="left:720px;top:772.5px" width="12" height="12"><circle cx="2" cy="5.8" r="1.6" fill="none" stroke="#262626" stroke-width="1.1"/><circle cx="9.8" cy="1.9" r="1.5" fill="none" stroke="#262626" stroke-width="1.1"/><circle cx="9.8" cy="9.8" r="1.5" fill="none" stroke="#262626" stroke-width="1.1"/><path d="M3.4 5l5-2.4M3.4 6.6l5 2.4" stroke="#262626" stroke-width="1.1"/></svg>
<div class="t" style="left:737.5px;top:772.49px;font-size:13.2px;line-height:13.2px;color:#262626;font-weight:normal;">Marketing Team</div>
<div class="a" style="left:993px;top:767.0px;width:170px;height:24px;background:#fafafa;border:1px solid #d9d9d9;border-radius:2px"></div>
<div class="t" style="left:1002px;top:772.49px;font-size:13.2px;line-height:13.2px;color:#262626;font-weight:normal;">testbackup62@gmail.com</div>
<div class="a" style="left:1171px;top:767.0px;width:33px;height:24px;background:#fafafa;border:1px solid #d9d9d9;border-radius:2px"></div>
<div class="t" style="left:1180px;top:772.49px;font-size:13.2px;line-height:13.2px;color:#262626;font-weight:normal;">+4</div>
<div class="t" style="left:1276px;top:771.13px;font-size:15.4px;line-height:15.4px;color:#262626;font-weight:normal;">January 25, 2022 6:37 AM</div>
<div class="a" style="left:1859px;top:772.7px;width:2.2px;height:2.2px;background:#1890ff"></div>
<div class="a" style="left:1859px;top:778.2px;width:2.2px;height:2.2px;background:#1890ff"></div>
<div class="a" style="left:1859px;top:783.7px;width:2.2px;height:2.2px;background:#1890ff"></div>
<div class="a" style="left:260px;top:873px;width:1627px;height:1px;background:#ebebeb"></div>
<div class="a" style="left:268px;top:832px;width:18px;height:18px;background:#fff;border:1px solid #d9d9d9;border-radius:2px"></div>
<svg style="left:304px;top:833px" width="17" height="18"><rect width="17" height="18" rx="1" fill="#dc3232"/><path d="M1.8 14.1L6.2 7.9L9.3 12.2L11.4 9L15.2 14.1Z" fill="#fff"/></svg>
<div class="t" style="left:327.4px;top:833.80px;font-size:15.4px;line-height:15.4px;color:#262626;font-weight:normal;">bg-pinterest@2x.png</div>
<div class="a" style="left:711px;top:830.0px;width:128px;height:24px;background:#fafafa;border:1px solid #d9d9d9;border-radius:2px"></div>
<svg style="left:720px;top:835.1px" width="12" height="12"><circle cx="2" cy="5.8" r="1.6" fill="none" stroke="#262626" stroke-width="1.1"/><circle cx="9.8" cy="1.9" r="1.5" fill="none" stroke="#262626" stroke-width="1.1"/><circle cx="9.8" cy="9.8" r="1.5" fill="none" stroke="#262626" stroke-width="1.1"/><path d="M3.4 5l5-2.4M3.4 6.6l5 2.4" stroke="#262626" stroke-width="1.1"/></svg>
<div class="t" style="left:737.5px;top:835.16px;font-size:13.2px;line-height:13.2px;color:#262626;font-weight:normal;">Marketing Team</div>
<div class="a" style="left:993px;top:830.0px;width:170px;height:24px;background:#fafafa;border:1px solid #d9d9d9;border-radius:2px"></div>
<div class="t" style="left:1002px;top:835.16px;font-size:13.2px;line-height:13.2px;color:#262626;font-weight:normal;">testbackup62@gmail.com</div>
<div class="a" style="left:1171px;top:830.0px;width:33px;height:24px;background:#fafafa;border:1px solid #d9d9d9;border-radius:2px"></div>
<div class="t" style="left:1180px;top:835.16px;font-size:13.2px;line-height:13.2px;color:#262626;font-weight:normal;">+3</div>
<div class="t" style="left:1276px;top:833.80px;font-size:15.4px;line-height:15.4px;color:#262626;font-weight:normal;">January 25, 2022 6:37 AM</div>
<div class="a" style="left:1859px;top:835.3px;width:2.2px;height:2.2px;background:#1890ff"></div>
<div class="a" style="left:1859px;top:840.8px;width:2.2px;height:2.2px;background:#1890ff"></div>
<div class="a" style="left:1859px;top:846.3px;width:2.2px;height:2.2px;background:#1890ff"></div></body></html>
